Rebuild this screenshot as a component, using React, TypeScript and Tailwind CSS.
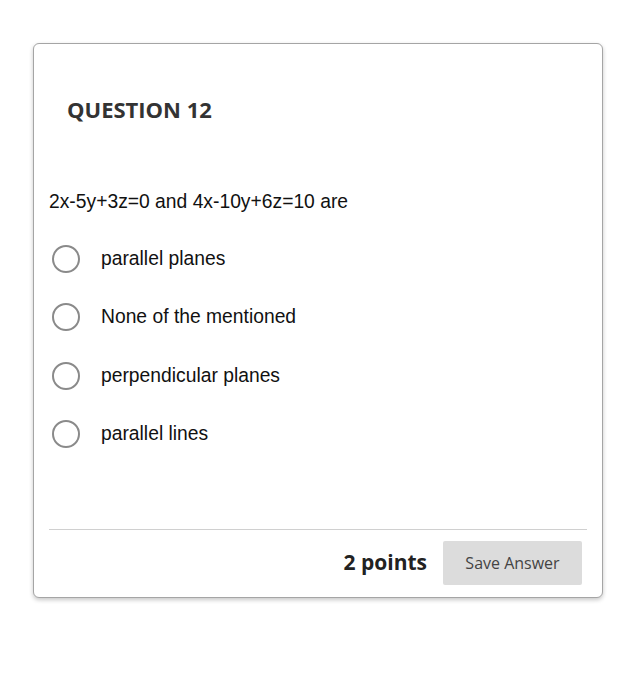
import React from 'react';

const options = ['parallel planes', 'None of the mentioned', 'perpendicular planes', 'parallel lines'];

const App: React.FC = () => {
  return (
    <div className="min-h-[700px] w-[636px] bg-white pl-[33px] pt-[43px]">
      <div className="w-[570px] rounded-md border border-[#a5a5a5] bg-white shadow-[0_2px_4px_rgba(0,0,0,0.22)]">
        {/* Title */}
        <div className="pl-[33px] pt-[50px]">
          <h2 className="font-['Open_Sans',sans-serif] text-[22px] font-bold leading-[30px] text-[#333]">
            QUESTION 12
          </h2>
        </div>

        {/* Question */}
        <p className="mt-[67px] pl-[15px] font-['Liberation_Sans',Arial,sans-serif] text-[19.3px] leading-[22px] text-[#111]">
          2x-5y+3z=0 and 4x-10y+6z=10 are
        </p>

        {/* Options */}
        <div className="mt-[17px] flex flex-col pl-[18px]">
          {options.map((opt) => (
            <label key={opt} className="flex h-[58.3px] items-center gap-[21px]">
              <span className="h-[28px] w-[28px] shrink-0 rounded-full border-2 border-[#8a8a8a] bg-white" />
              <span className="font-['Liberation_Sans',Arial,sans-serif] text-[19.3px] leading-[22px] text-[#111]">
                {opt}
              </span>
            </label>
          ))}
        </div>

        {/* Footer */}
        <div className="mx-[15px] mt-[66px] border-t border-[#d0d0d0]" />
        <div className="flex items-center justify-end gap-[16px] pb-[12px] pr-[20px] pt-[11px]">
          <span className="font-['Open_Sans',sans-serif] text-[21px] font-bold text-[#222]">2 points</span>
          <button className="flex h-[44px] w-[139px] items-center justify-center rounded-[2px] bg-[#dcdcdc] font-['Open_Sans',sans-serif] text-[16px] text-[#444]">
            Save Answer
          </button>
        </div>
      </div>
    </div>
  );
};

export default App;
